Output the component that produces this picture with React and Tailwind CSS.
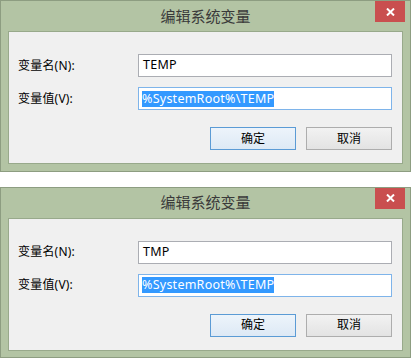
const font = { fontFamily: '"Segoe UI", "Noto Sans", "Noto Sans CJK SC", sans-serif' };

function CloseButton() {
  return (
    <div className="absolute top-0 right-[5px] w-[30px] h-[21px] bg-[#c94f4f] flex items-center justify-center">
      <svg width="9" height="8" viewBox="0 0 9 8">
        <path d="M1 0.5 L8 7.5 M8 0.5 L1 7.5" stroke="#fff" strokeWidth="2" />
      </svg>
    </div>
  );
}

function Field({ label, children, focused }) {
  return (
    <div className="flex items-center">
      <div className="w-[120px] text-[12px] tracking-[0.2px] text-black">{label}</div>
      <div
        className={`flex-1 h-[23px] bg-white border flex items-center pl-[3px] text-[12.5px] tracking-[0.25px] ${
          focused ? "border-[#7eb4ea]" : "border-[#abadb3]"
        }`}
      >
        {children}
      </div>
    </div>
  );
}

function Dialog({ name }) {
  return (
    <div className="relative h-[172px] bg-[#b3c4a4] border border-[#8d9d81] flex flex-col">
      <div className="h-[30px] flex items-center justify-center text-[15px] text-[#3a3a3a]">
        编辑系统变量
      </div>
      <CloseButton />
      <div className="mx-[7px] h-[133px] bg-[#f0f0f0] border border-[#98a98b] pt-[22px] pl-[9px] pr-[10px] flex flex-col">
        <div className="flex flex-col gap-[10px]">
          <Field label="变量名(N):">
            <span className="pl-[1px] text-black">{name}</span>
          </Field>
          <Field label="变量值(V):" focused>
            <span className="bg-[#3399ff] text-white leading-[16px]">%SystemRoot%\TEMP</span>
          </Field>
        </div>
        <div className="mt-[17px] flex justify-end gap-[10px]">
          <button className="w-[86px] h-[23px] border border-[#5b9bd5] bg-gradient-to-b from-[#edf4fb] to-[#dde9f5] text-[12px] text-black">
            确定
          </button>
          <button className="w-[86px] h-[23px] border border-[#adadad] bg-gradient-to-b from-[#f2f2f2] to-[#e3e3e3] text-[12px] text-black">
            取消
          </button>
        </div>
      </div>
    </div>
  );
}

export default function App() {
  return (
    <div className="w-[411px] h-[358px] bg-white overflow-hidden flex flex-col gap-[15px]" style={font}>
      <Dialog name="TEMP" />
      <Dialog name="TMP" />
    </div>
  );
}
